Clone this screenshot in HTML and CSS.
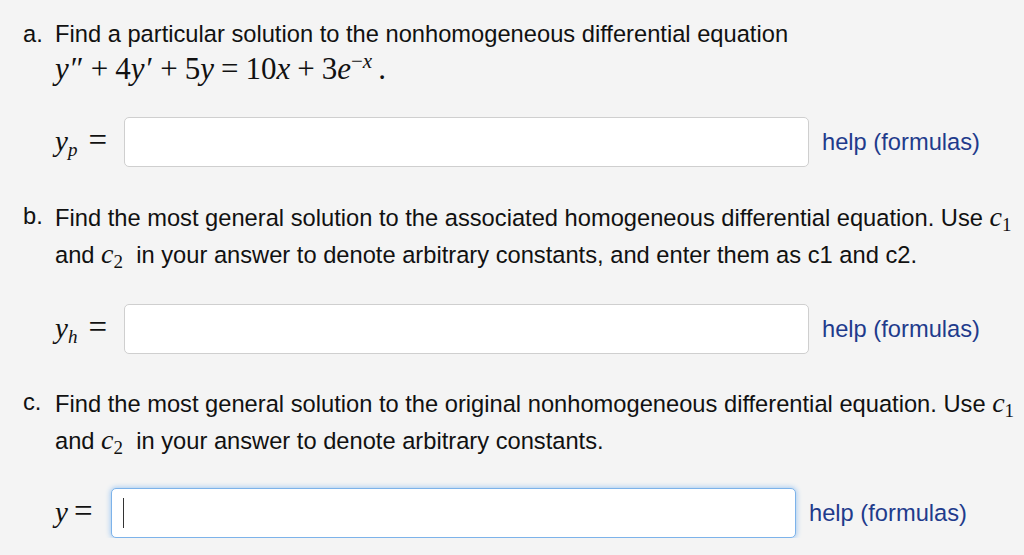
FILE: index.html
```html
<!DOCTYPE html>
<html lang="en">
 <head>
  <meta charset="utf-8" />
  <title>differential equations</title>
  <link rel="stylesheet" href="styles.css">
 </head>
 <body>
  <div class="part part-a">
   <div class="mark">a.</div>
   <div class="body">
    <p>Find a particular solution to the nonhomogeneous differential equation</p>
    <p class="eq"><i>y</i><span class="pr">″</span><span class="op">+</span>4<i>y</i><span class="pr">′</span><span class="op">+</span>5<i>y</i><span class="op">=</span>10<i>x</i><span class="op">+</span>3<i>e</i><sup>−<i>x</i></sup>&thinsp;.</p>
    <div class="answer">
     <span class="lbl"><i>y<sub>p</sub></i><span class="eqs">=</span></span>
     <div class="field"></div>
     <a class="help" href="#">help (formulas)</a>
    </div>
   </div>
  </div>

  <div class="part part-b">
   <div class="mark">b.</div>
   <div class="body">
    <p>Find the most general solution to the associated homogeneous differential equation. Use <span class="m"><i>c</i><sub>1</sub></span><br>
    and <span class="m"><i>c</i><sub>2</sub></span>&nbsp; in your answer to denote arbitrary constants, and enter them as c1 and c2.</p>
    <div class="answer">
     <span class="lbl"><i>y<sub>h</sub></i><span class="eqs">=</span></span>
     <div class="field"></div>
     <a class="help" href="#">help (formulas)</a>
    </div>
   </div>
  </div>

  <div class="part part-c">
   <div class="mark">c.</div>
   <div class="body">
    <p>Find the most general solution to the original nonhomogeneous differential equation. Use <span class="m"><i>c</i><sub>1</sub></span><br>
    and <span class="m"><i>c</i><sub>2</sub></span>&nbsp; in your answer to denote arbitrary constants.</p>
    <div class="answer">
     <span class="lbl tight"><i>y</i><span class="eqs">=</span></span>
     <div class="field focus"><span class="caret"></span></div>
     <a class="help" href="#">help (formulas)</a>
    </div>
   </div>
  </div>
 </body>
</html>
```

FILE: styles.css
```css
* { margin: 0; padding: 0; }
body {
  background-color: #f4f4f4;
  color: #111;
  font-family: "Liberation Sans", Arial, sans-serif;
  font-size: 23.7px;
  line-height: 35px;
  padding: 17px 0 0 0;
}
.part {
  display: flex;
}
.mark {
  width: 32px;
  padding-left: 23px;
}
.body {
  flex: 1;
}
.part-b { margin-top: 32px; }
.part-c { margin-top: 31px; }
.eq {
  font-family: "Liberation Serif", "Times New Roman", serif;
  font-size: 31px;
  line-height: 33px;
}
.eq .op {
  margin: 0 7px;
}
.eq .pr {
  margin-left: 2px;
}
.eq sup {
  font-size: 21px;
  vertical-align: 11px;
  line-height: 0;
}
.m {
  font-family: "Liberation Serif", "Times New Roman", serif;
  font-size: 28px;
}
.m sub, .lbl sub {
  font-size: 19px;
  font-style: normal;
  vertical-align: -5px;
  line-height: 0;
}
.lbl sub { font-style: italic; }
.answer {
  display: flex;
  align-items: center;
  margin-top: 31px;
}
.part-a .answer { margin-top: 32px; }
.part-c .answer { margin-top: 29px; }
.lbl {
  font-family: "Liberation Serif", "Times New Roman", serif;
  font-size: 29px;
  display: flex;
  align-items: baseline;
  width: 69px;
  margin-top: -3px;
}
.lbl .eqs {
  margin-left: 11px;
  font-size: 33px;
}
.lbl.tight { width: 56px; }
.lbl.tight .eqs { margin-left: 6px; }
.field {
  width: 672px;
  height: 48px;
  background: #fff;
  border: 1px solid #cfcfcf;
  border-radius: 5px;
  display: flex;
  align-items: center;
  padding-left: 11px;
  box-sizing: content-box;
}
.field.focus {
  border-color: #7db3ea;
  box-shadow: 0 0 5px 1px #a9cdf2;
}
.caret {
  width: 1px;
  height: 30px;
  background: #333;
}
.help {
  margin-left: 13px;
  color: #1f3b8c;
  text-decoration: none;
}
```
